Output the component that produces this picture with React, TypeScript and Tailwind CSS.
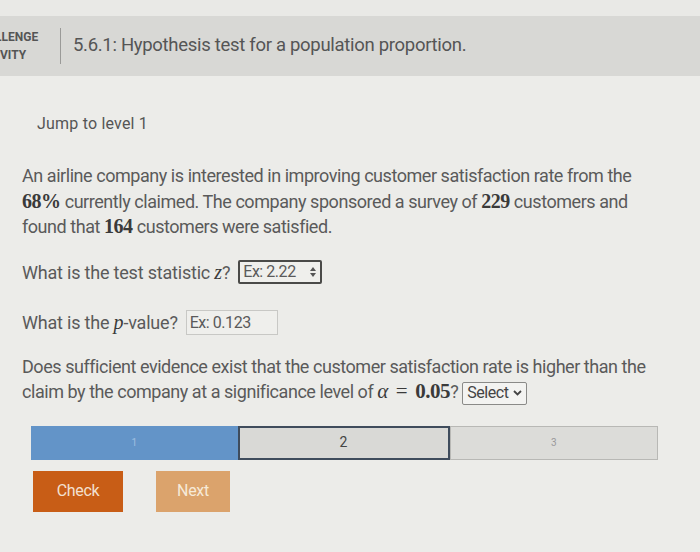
import React from "react";

const sans = { fontFamily: "Roboto, 'Liberation Sans', sans-serif" };
const serif = "font-['Liberation_Serif',serif]";

function M({ children, bold = true }: { children: React.ReactNode; bold?: boolean }) {
  return (
    <span className={`${serif} ${bold ? "font-bold" : "italic"} text-[20px] text-[#3a3a3a]`}>
      {children}
    </span>
  );
}

export default function App() {
  return (
    <div className="h-[552px] w-[700px] overflow-hidden bg-[#ecece9] text-[#5a5a5a]" style={sans}>
      <div className="h-[16px] bg-[#e9e9e6]" />
      <div className="flex h-[60px] items-center bg-[#d8d8d5]">
        <div className="flex w-[60px] flex-col gap-[5px] text-[12px] font-bold leading-[13px] text-[#555]">
          <span className="-ml-[5px] whitespace-nowrap">LLENGE</span>
          <span>VITY</span>
        </div>
        <div className="h-[36px] w-[1px] bg-[#9a9a98]" />
        <div className="ml-[12px] text-[18.5px] tracking-[-0.3px] text-[#555]">
          5.6.1: Hypothesis test for a population proportion.
        </div>
      </div>

      <div className="pl-[37px] pt-[36px] text-[16px] tracking-[0.2px] text-[#555]">Jump to level 1</div>

      <div className="whitespace-nowrap pl-[22px] pt-[28px] text-[18px] leading-[24.5px] tracking-[-0.45px]">
        <p>
          An airline company is interested in improving customer satisfaction rate from the
          <br />
          <M>68%</M> currently claimed. The company sponsored a survey of <M>229</M> customers and
          <br />
          found that <M>164</M> customers were satisfied.
        </p>

        <div className="mt-[20px] flex items-center gap-[8px]">
          <span className="tracking-[-0.2px]">
            What is the test statistic <M bold={false}>z</M>?
          </span>
          <div className="flex h-[24px] w-[84px] items-center justify-between rounded-[2px] border-2 border-[#4a4a48] bg-[#efefec] pl-[3px] pr-[3px] text-[16px]">
            <span>Ex: 2.22</span>
            <svg width="8" height="12" viewBox="0 0 8 12">
              <path d="M1 5 L4 1 L7 5 Z M1 7 L4 11 L7 7 Z" fill="#555" />
            </svg>
          </div>
        </div>

        <div className="mt-[25px] flex items-center gap-[8px]">
          <span className="tracking-[-0.2px]">
            What is the <M bold={false}>p</M>-value?
          </span>
          <div className="flex h-[25px] w-[92px] items-center border border-[#c8c8c5] bg-[#efefec] pl-[3px] text-[16px]">
            Ex: 0.123
          </div>
        </div>

        <p className="mt-[19px]">
          Does sufficient evidence exist that the customer satisfaction rate is higher than the
          <br />
          claim by the company at a significance level of{" "}
          <span className={`${serif} italic text-[21px] text-[#3a3a3a]`}>α</span>
          <span className={`${serif} px-[8px] text-[21px] text-[#3a3a3a]`}>=</span>
          <span className={`${serif} font-bold text-[21px] text-[#3a3a3a]`}>0.05</span>?{" "}
          <span className="inline-flex h-[23px] items-center gap-[4px] rounded-[2px] border border-[#8a8a88] bg-[#f3f3f1] px-[4px] align-middle text-[16px] text-[#444]">
            Select
            <svg width="9" height="6" viewBox="0 0 9 6">
              <path d="M1 1 L4.5 4.5 L8 1" stroke="#444" strokeWidth="1.8" fill="none" />
            </svg>
          </span>
        </p>
      </div>

      <div className="ml-[31px] mt-[21px] flex h-[34px] w-[627px]">
        <div className="flex flex-1 items-center justify-center bg-[#6394c8] text-[10px] text-[#9fbfe0]">1</div>
        <div className="flex w-[212px] items-center justify-center border-2 border-[#3f4c5c] bg-[#d9d9d6] text-[14px] text-[#444]">
          2
        </div>
        <div className="flex flex-1 items-center justify-center border border-[#b8b8b5] bg-[#dcdcd9] text-[10px] text-[#999]">
          3
        </div>
      </div>

      <div className="ml-[33px] mt-[11px] flex gap-[33px]">
        <button className="h-[41px] w-[90px] bg-[#c85d16] text-[16px] tracking-[-0.3px] text-[#f3e0d0]">Check</button>
        <button className="h-[41px] w-[74px] bg-[#dba36c] text-[16px] tracking-[-0.3px] text-[#f6ead8]">Next</button>
      </div>
    </div>
  );
}
